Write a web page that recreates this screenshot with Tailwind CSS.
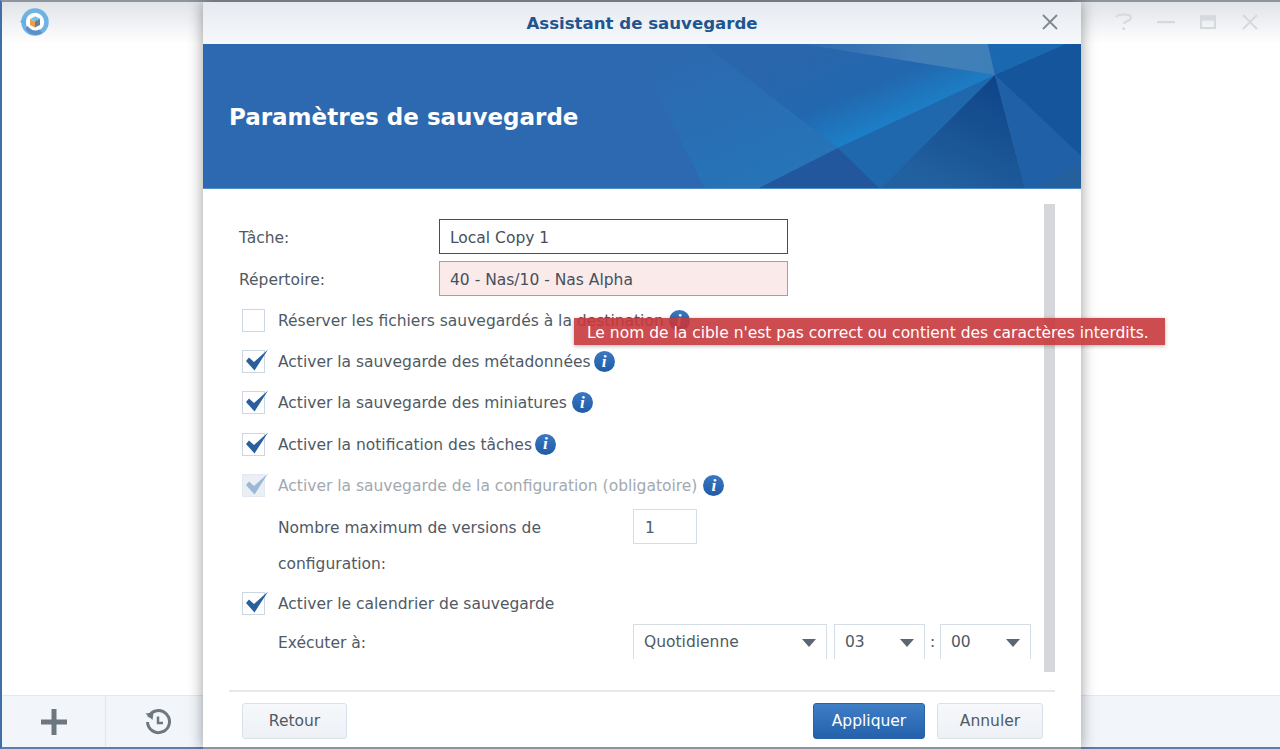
<!DOCTYPE html>
<html lang="fr">
<head>
<meta charset="utf-8">
<title>Assistant de sauvegarde</title>
<script src="https://cdn.jsdelivr.net/npm/@tailwindcss/browser@4"></script>
</head>
<body class="m-0 overflow-hidden bg-white">
<div class="relative h-[749px] w-[1280px] overflow-hidden bg-white font-['DejaVu_Sans',sans-serif] text-[15.5px] text-[#505a64]">

  <!-- background window -->
  <div class="absolute inset-0 flex flex-col border-t-2 border-b-2 border-l-2 border-t-[#8d949d] border-b-[#5f7ea6] border-l-[#3f6fa9]">
    <div class="flex h-[42px] items-center bg-gradient-to-b from-[#e0e3e8] to-white">
      <svg class="ml-[17px] -mt-[2px] h-[30px] w-[30px]" viewBox="0 0 30 30">
        <circle cx="16" cy="15" r="11.5" fill="#fff" stroke="#6fb3e3" stroke-width="4.5"/>
        <path d="M6.5 22a13 13 0 0 0 9.5 6a13 13 0 0 0 7 -2l-2.5 -3.5a9 9 0 0 1 -10 -1.500l-2 -2z" fill="#5f8fc4"/>
        <path d="M1 14.500l6 -4.500v9z" fill="#5fb0e6"/>
        <path d="M16 9.500l5 2.500v6l-5 2.500z" fill="#6c7f96"/>
        <path d="M11 12l5 2.500v6l-5 -2.500z" fill="#ee9f45"/>
        <path d="M11 12l5 -2.500l5 2.500l-5 2.500z" fill="#6fc1ee"/>
      </svg>
      <div class="ml-auto mr-[20px] -mt-[3px] flex items-center gap-[22px]">
        <svg class="h-[20px] w-[20px]" viewBox="0 0 20 20" fill="none" stroke="#d6d9dd" stroke-width="2.200"><path d="M2 5c1 -2 3 -2.500 7.500 -2.500c5 0 7.500 1 7.500 3.500c0 3 -7 3 -7 6"/><path d="M8.500 15.500h2.500v2.500h-2.500z" fill="#d6d9dd" stroke="none"/></svg>
        <svg class="h-[20px] w-[20px]" viewBox="0 0 20 20"><rect x="1" y="9" width="18" height="2.200" fill="#d6d9dd"/></svg>
        <svg class="h-[20px] w-[20px]" viewBox="0 0 20 20" fill="none" stroke="#d6d9dd" stroke-width="2"><rect x="3" y="4" width="14" height="12"/><rect x="3" y="4" width="14" height="3.500" fill="#d6d9dd"/></svg>
        <svg class="h-[20px] w-[20px]" viewBox="0 0 20 20" fill="none" stroke="#d6d9dd" stroke-width="2"><path d="M3 3l14 14M17 3l-14 14"/></svg>
      </div>
    </div>
    <div class="flex-1"></div>
    <div class="flex h-[52px] border-t border-[#e3e9f0] bg-[#f2f6fb]">
      <div class="flex w-[104px] items-center justify-center border-r border-[#dfe6ee]">
        <svg class="h-[26px] w-[26px]" viewBox="0 0 26 26"><path d="M10.500 0h5v10.500h10.500v5h-10.500v10.500h-5v-10.500h-10.500v-5h10.500z" fill="#6e7780"/></svg>
      </div>
      <div class="flex w-[104px] items-center justify-center">
        <svg class="-ml-[1px] h-[26px] w-[26px]" viewBox="0 0 26 26" fill="none" stroke="#6e7780" stroke-width="3"><path d="M3.500 8a11 11 0 1 1 -1 5"/><path d="M0.500 4.500l8 -1l-1 7.500z" fill="#6e7780" stroke="none"/><path d="M13 7.500v6.500h5" stroke-width="2.500"/></svg>
      </div>
    </div>
  </div>

  <!-- dialog -->
  <div class="absolute left-[203px] top-[2px] flex h-[747px] w-[878px] flex-col border-b-2 border-[#8d949d] bg-white shadow-[0_0_14px_rgba(0,0,0,0.4)]">
    <div class="relative flex h-[42px] shrink-0 items-center justify-center bg-gradient-to-b from-[#e6eaf0] to-[#f6f8fb] pt-[3px]">
      <span class="text-[16.6px] font-bold text-[#1f5590]">Assistant de sauvegarde</span>
      <svg class="absolute right-[23px] top-[12px] h-[16px] w-[16px]" viewBox="0 0 16 16" fill="none" stroke="#7f8790" stroke-width="1.800"><path d="M1 1l14 14M15 1l-14 14"/></svg>
    </div>

    <div class="relative flex h-[145px] shrink-0 items-center bg-[#2d6bb2] pl-[26px] pt-[2px]">
      <svg class="absolute inset-0 h-full w-full" viewBox="0 0 878 145" preserveAspectRatio="none">
        <defs>
          <linearGradient id="g1" gradientUnits="userSpaceOnUse" x1="500" y1="0" x2="560" y2="145"><stop offset="0" stop-color="#2c69af"/><stop offset="1" stop-color="#2674b9"/></linearGradient>
          <linearGradient id="g2" gradientUnits="userSpaceOnUse" x1="590" y1="10" x2="630" y2="104"><stop offset="0" stop-color="#2a66ac"/><stop offset="0.6" stop-color="#2268af"/><stop offset="1" stop-color="#1c7fc6"/></linearGradient>
          <linearGradient id="g3" gradientUnits="userSpaceOnUse" x1="792" y1="31" x2="740" y2="145"><stop offset="0" stop-color="#0f4488"/><stop offset="1" stop-color="#22619f"/></linearGradient>
          <linearGradient id="g4" gradientUnits="userSpaceOnUse" x1="600" y1="0" x2="790" y2="30"><stop offset="0" stop-color="#2c6ab0"/><stop offset="0.6" stop-color="#437fb7"/><stop offset="1" stop-color="#3f7fb8"/></linearGradient>
        </defs>
        <rect width="878" height="145" fill="#2c69b0"/>
        <path d="M430 0L502 145H554L635 104L500 0z" fill="url(#g1)"/>
        <path d="M500 0H600L792 31L635 104z" fill="url(#g2)"/>
        <path d="M600 0H785L792 31z" fill="url(#g4)"/>
        <path d="M785 0H863L792 31z" fill="#1a68b0"/>
        <path d="M863 0H878V112L792 31z" fill="#15559c"/>
        <path d="M792 31L635 104L677 145z" fill="#2068ad"/>
        <path d="M792 31L677 145H822z" fill="url(#g3)"/>
        <path d="M792 31L878 112V118L830 145H822z" fill="#1f60a6"/>
        <path d="M878 118V145H830z" fill="#24609d"/>
        <path d="M635 104L554 145H677z" fill="#22579e"/>
        <rect y="144" width="878" height="1" fill="#4f8ecb"/>
      </svg>
      <h1 class="relative m-0 text-[23px] font-bold text-white">Paramètres de sauvegarde</h1>
    </div>

    <div class="flex min-h-0 flex-1 flex-col pl-[26px] pr-[26px]">
      <div class="flex h-[483px] shrink-0">
        <div class="flex h-[470px] w-[815px] flex-col overflow-hidden pl-[10px] pt-[30px]">
          <div class="flex h-[35px] shrink-0 items-center">
            <label class="w-[200px] pt-[4px]">Tâche:</label>
            <div class="flex h-[35px] w-[349px] items-center border border-[#3d4f60] pl-[10px] pt-[5px] text-[#46505a]">Local Copy 1</div>
          </div>
          <div class="mt-[7px] flex h-[35px] shrink-0 items-center">
            <label class="w-[200px] pt-[4px]">Répertoire:</label>
            <div class="flex h-[35px] w-[349px] items-center border border-[#d98a8a] bg-[#fbeaea] pl-[10px] pt-[5px] text-[#46505a]">40 - Nas/10 - Nas Alpha</div>
          </div>

          <div class="mt-[4px] flex h-[41px] shrink-0 items-center pl-[3px]">
            <span class="mr-[13px] h-[23px] w-[23px] border border-[#cdd7e2] bg-white"></span>
            <span class="pt-[3px]">Réserver les fichiers sauvegardés à la destination</span>
            <span class="ml-[5px] flex h-[21px] w-[21px] items-center justify-center rounded-full bg-gradient-to-b from-[#3a78c2] to-[#1f5ba6] font-['Liberation_Serif',serif] text-[17px] font-bold italic text-white">i</span>
          </div>
          <div class="flex h-[41px] shrink-0 items-center pl-[3px]">
            <span class="relative mr-[13px] h-[23px] w-[23px] border border-[#cdd7e2] bg-white"><svg class="absolute -top-[3px] left-[2px] h-[26px] w-[24px] overflow-visible" viewBox="0 0 24 26"><path d="M1 13l3 -3.500l5 4.500l14 -12.500l-13.500 21z" fill="#2a5f9e"/></svg></span>
            <span class="pt-[3px]">Activer la sauvegarde des métadonnées</span>
            <span class="ml-[3px] flex h-[21px] w-[21px] items-center justify-center rounded-full bg-gradient-to-b from-[#3a78c2] to-[#1f5ba6] font-['Liberation_Serif',serif] text-[17px] font-bold italic text-white">i</span>
          </div>
          <div class="flex h-[41px] shrink-0 items-center pl-[3px]">
            <span class="relative mr-[13px] h-[23px] w-[23px] border border-[#cdd7e2] bg-white"><svg class="absolute -top-[3px] left-[2px] h-[26px] w-[24px] overflow-visible" viewBox="0 0 24 26"><path d="M1 13l3 -3.500l5 4.500l14 -12.500l-13.500 21z" fill="#2a5f9e"/></svg></span>
            <span class="pt-[3px]">Activer la sauvegarde des miniatures</span>
            <span class="ml-[5px] flex h-[21px] w-[21px] items-center justify-center rounded-full bg-gradient-to-b from-[#3a78c2] to-[#1f5ba6] font-['Liberation_Serif',serif] text-[17px] font-bold italic text-white">i</span>
          </div>
          <div class="flex h-[42px] shrink-0 items-center pl-[3px]">
            <span class="relative mr-[13px] h-[23px] w-[23px] border border-[#cdd7e2] bg-white"><svg class="absolute -top-[3px] left-[2px] h-[26px] w-[24px] overflow-visible" viewBox="0 0 24 26"><path d="M1 13l3 -3.500l5 4.500l14 -12.500l-13.500 21z" fill="#2a5f9e"/></svg></span>
            <span class="pt-[3px]">Activer la notification des tâches</span>
            <span class="ml-[3px] flex h-[21px] w-[21px] items-center justify-center rounded-full bg-gradient-to-b from-[#3a78c2] to-[#1f5ba6] font-['Liberation_Serif',serif] text-[17px] font-bold italic text-white">i</span>
          </div>
          <div class="flex h-[41px] shrink-0 items-center pl-[3px]">
            <span class="relative mr-[13px] h-[23px] w-[23px] border border-[#e3e9f0] bg-[#e9eff5]"><svg class="absolute -top-[3px] left-[2px] h-[26px] w-[24px] overflow-visible" viewBox="0 0 24 26"><path d="M1 13l3 -3.500l5 4.500l14 -12.500l-13.500 21z" fill="#9db8d4"/></svg></span>
            <span class="pt-[3px] text-[#a3a9af]">Activer la sauvegarde de la configuration (obligatoire)</span>
            <span class="ml-[6px] flex h-[21px] w-[21px] items-center justify-center rounded-full bg-gradient-to-b from-[#3a78c2] to-[#1f5ba6] font-['Liberation_Serif',serif] text-[17px] font-bold italic text-white">i</span>
          </div>

          <div class="flex h-[77px] shrink-0 pl-[39px]">
            <div class="w-[355px] pt-[4px] leading-[36px]">Nombre maximum de versions de<br>configuration:</div>
            <div class="mt-[3px] flex h-[35px] w-[64px] items-center border border-[#d5dde6] pl-[11px] pt-[4px]">1</div>
          </div>

          <div class="flex h-[41px] shrink-0 items-center pl-[3px]">
            <span class="relative mr-[13px] h-[23px] w-[23px] border border-[#cdd7e2] bg-white"><svg class="absolute -top-[3px] left-[2px] h-[26px] w-[24px] overflow-visible" viewBox="0 0 24 26"><path d="M1 13l3 -3.500l5 4.500l14 -12.500l-13.500 21z" fill="#2a5f9e"/></svg></span>
            <span class="pt-[2px]">Activer le calendrier de sauvegarde</span>
          </div>

          <div class="flex h-[35px] shrink-0 items-center pl-[39px]">
            <span class="w-[355px] pt-[4px]">Exécuter à:</span>
            <div class="flex h-[35px] w-[194px] items-center justify-between border border-b-0 border-[#d5dde6] pl-[10px] pr-[10px] pt-[2px]">Quotidienne<svg class="h-[8px] w-[14px]" viewBox="0 0 14 8"><path d="M0 0h14l-7 8z" fill="#5c6670"/></svg></div>
            <div class="ml-[7px] flex h-[35px] w-[91px] items-center justify-between border border-b-0 border-[#d5dde6] pl-[10px] pr-[10px] pt-[2px]">03<svg class="h-[8px] w-[14px]" viewBox="0 0 14 8"><path d="M0 0h14l-7 8z" fill="#5c6670"/></svg></div>
            <span class="flex w-[15px] justify-center pt-[2px]">:</span>
            <div class="flex h-[35px] w-[91px] items-center justify-between border border-b-0 border-[#d5dde6] pl-[10px] pr-[10px] pt-[2px]">00<svg class="h-[8px] w-[14px]" viewBox="0 0 14 8"><path d="M0 0h14l-7 8z" fill="#5c6670"/></svg></div>
          </div>
        </div>
        <div class="mt-[15px] h-[468px] w-[11px] bg-[#d5d7da]"></div>
      </div>

      <div class="mt-[18px] h-[2px] w-[826px] shrink-0 bg-[#e6e8eb]"></div>

      <div class="mt-[11px] flex h-[36px] w-[814px] shrink-0 pl-[13px]">
        <button class="h-[36px] w-[105px] rounded-[3px] border border-[#d8e0ea] bg-gradient-to-b from-[#f6f8fb] to-[#edf1f6] pt-[1px] text-[15.5px] text-[#505a64]">Retour</button>
        <button class="ml-auto h-[36px] w-[112px] rounded-[3px] border border-[#2a62a8] bg-gradient-to-b from-[#3f7fc6] to-[#2461ab] pt-[1px] text-[15.5px] text-white">Appliquer</button>
        <button class="ml-[12px] h-[36px] w-[106px] rounded-[3px] border border-[#d8e0ea] bg-gradient-to-b from-[#f6f8fb] to-[#edf1f6] pt-[1px] text-[15.5px] text-[#505a64]">Annuler</button>
      </div>
    </div>
  </div>

  <!-- error tooltip -->
  <div class="absolute left-[574px] top-[318px] flex h-[27px] w-[591px] items-center bg-[#c7383c]/90 pl-[13px] pt-[4px] text-[15.5px] whitespace-nowrap text-white shadow-[0_1px_4px_rgba(0,0,0,0.3)]">Le nom de la cible n'est pas correct ou contient des caractères interdits.</div>
</div>
</body>
</html>
